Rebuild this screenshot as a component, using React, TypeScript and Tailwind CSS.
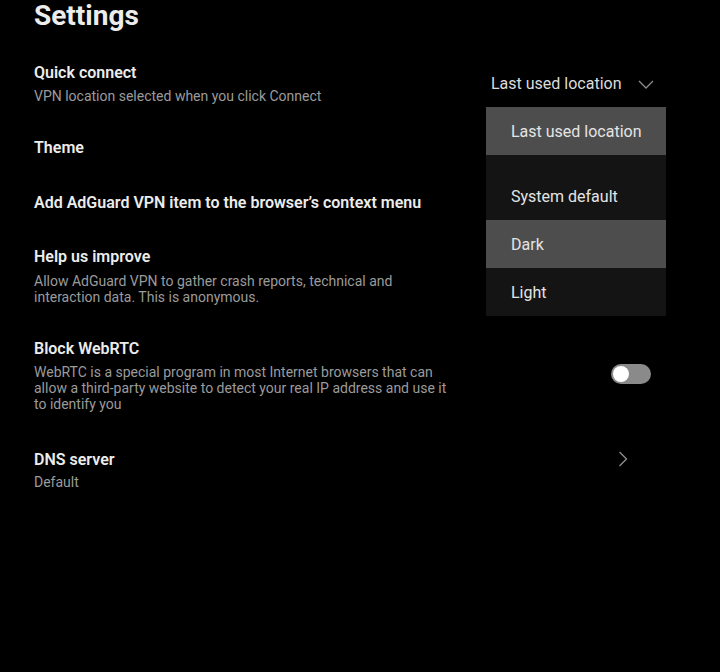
import React from "react";

function Row({
  title,
  desc,
  right,
  className = "",
  descClass = "mt-[5px]",
}: {
  title: string;
  desc?: React.ReactNode;
  right?: React.ReactNode;
  className?: string;
  descClass?: string;
}) {
  return (
    <div className={`flex items-center ${className}`}>
      <div className="w-[420px]">
        <div className="pt-[1px] text-[16px] leading-5 font-semibold text-[#ececec]">{title}</div>
        {desc && (
          <div className={`${descClass} text-[14px] leading-4 text-[#9b9b9b]`}>{desc}</div>
        )}
      </div>
      {right}
    </div>
  );
}

export default function App() {
  return (
    <div
      className="relative w-[720px] h-[672px] bg-black overflow-hidden"
      style={{ fontFamily: "Roboto, 'Noto Sans', sans-serif" }}
    >
      <div className="pl-[34px]">
        <h1 className="text-[28px] leading-8 font-bold text-[#ececec]">Settings</h1>

        <Row
          className="mt-[30px]"
          title="Quick connect"
          desc="VPN location selected when you click Connect"
          right={
            <div className="ml-[37px] pt-[2px] flex items-center text-[16px] leading-5 text-[#dcdcdc]">
              <span>Last used location</span>
              <svg width="16" height="9" viewBox="0 0 16 9" className="ml-[16px]">
                <polyline
                  points="1,1 8,8 15,1"
                  fill="none"
                  stroke="#8c8c8c"
                  strokeWidth="1.3"
                />
              </svg>
            </div>
          }
        />

        <Row className="mt-[33px]" title="Theme" />

        <Row
          className="mt-[34px]"
          title="Add AdGuard VPN item to the browser’s context menu"
        />

        <Row
          className="mt-[33px]"
          descClass="mt-[6px]"
          title="Help us improve"
          desc="Allow AdGuard VPN to gather crash reports, technical and interaction data. This is anonymous."
        />

        <Row
          className="mt-[33px]"
          title="Block WebRTC"
          desc="WebRTC is a special program in most Internet browsers that can allow a third-party website to detect your real IP address and use it to identify you"
          right={
            <div className="ml-[157px] mb-[2px] relative w-[40px] h-[20px] rounded-full bg-[#8a8a8a]">
              <div className="absolute left-[2px] top-[2px] w-[16px] h-[16px] rounded-full bg-white" />
            </div>
          }
        />

        <div className="mt-[37px] flex items-start">
          <div className="w-[420px]">
            <div className="pt-[1px] text-[16px] leading-5 font-semibold text-[#ececec]">DNS server</div>
            <div className="mt-[4px] text-[14px] leading-4 text-[#9b9b9b]">Default</div>
          </div>
          <svg
            width="10"
            height="16"
            viewBox="0 0 10 16"
            className="ml-[164px] mt-[2px]"
          >
            <polyline
              points="1.5,1 8.5,8 1.5,15"
              fill="none"
              stroke="#8c8c8c"
              strokeWidth="1.4"
            />
          </svg>
        </div>
      </div>

      <div className="absolute left-[486px] top-[107px] w-[180px] bg-[#141414] text-[16px] leading-5 text-[#e4e4e4]">
        <div className="h-[48px] flex items-center pl-[25px] pt-[2px] bg-[#4d4d4d]">Last used location</div>
        <div className="h-[17px]" />
        <div className="h-[48px] flex items-center pl-[25px] pt-[2px]">System default</div>
        <div className="h-[48px] flex items-center pl-[25px] pt-[2px] bg-[#4d4d4d]">Dark</div>
        <div className="h-[48px] flex items-center pl-[25px] pt-[2px]">Light</div>
      </div>
    </div>
  );
}
